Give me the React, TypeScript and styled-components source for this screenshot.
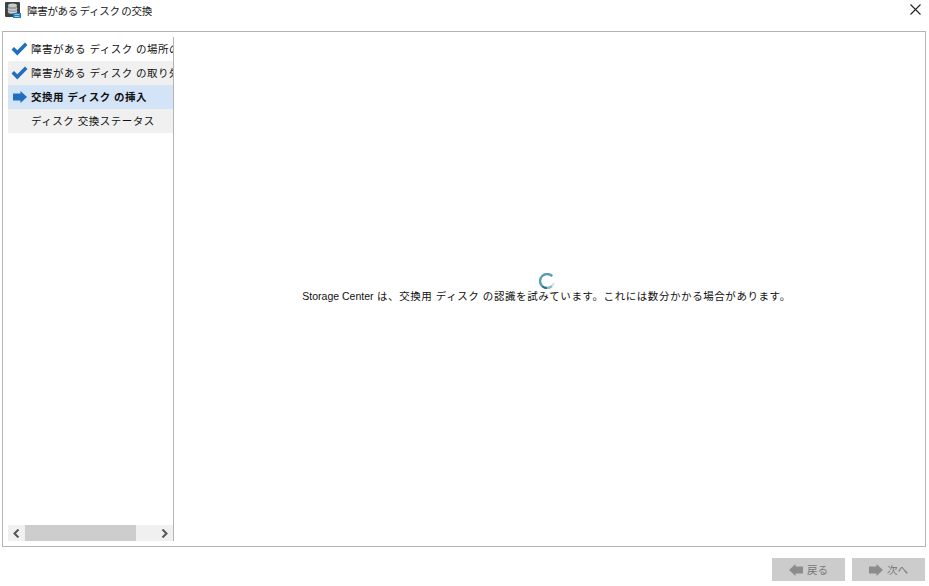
import React from "react"
import styled, { createGlobalStyle } from "styled-components"

const jpFont = `"Liberation Sans", "Noto Sans CJK JP", sans-serif`

const GlobalStyle = createGlobalStyle`
  html, body {
    margin: 0;
    padding: 0;
    background: #fff;
    font-family: ${jpFont};
  }
`

const steps = [
  { id: 1, label: "障害がある ディスク の場所の確認", state: "done" },
  { id: 2, label: "障害がある ディスク の取り外し", state: "done" },
  { id: 3, label: "交換用 ディスク の挿入", state: "current" },
  { id: 4, label: "ディスク 交換ステータス", state: "todo" },
]

const CheckIcon = () => (
  <svg width="17" height="14" viewBox="0 0 17 14">
    <path d="M0.5 7.5 L3 5 L6.3 8.2 L14 0.5 L16.5 3 L6.3 13.5 Z" fill="#1f6fbe" />
  </svg>
)

const ArrowIcon = ({ color, flip }: { color: string; flip?: boolean }) => (
  <svg
    width="14"
    height="12"
    viewBox="0 0 14 12"
    style={flip ? { transform: "scaleX(-1)" } : undefined}
  >
    <path d="M0 2.5 H7.5 V0 L14 6 L7.5 12 V9.5 H0 Z" fill={color} />
  </svg>
)

const AppIcon = () => (
  <svg width="16" height="16" viewBox="0 0 16 16">
    <rect x="0" y="0" width="15" height="15" rx="1" fill="#3f4244" />
    <ellipse cx="7.5" cy="3.5" rx="4.5" ry="2" fill="#c9cccd" />
    <path d="M3 3.5 V10.5 C3 12.5 12 12.5 12 10.5 V3.5 C12 5.5 3 5.5 3 3.5 Z" fill="#9a9fa2" />
    <path d="M3 6.5 C3 8.5 12 8.5 12 6.5 M3 9 C3 11 12 11 12 9" stroke="#e3e5e6" fill="none" />
    <rect x="8" y="11" width="8" height="5" fill="#1d7fbf" />
    <path d="M9.5 12.5 H14.5 M9.5 14.5 H14.5" stroke="#bcdcf0" strokeWidth="0.8" />
  </svg>
)

const CloseIcon = () => (
  <svg width="11" height="11" viewBox="0 0 11 11">
    <path d="M0.5 0.5 L10.5 10.5 M10.5 0.5 L0.5 10.5" stroke="#222" strokeWidth="1.1" fill="none" />
  </svg>
)

const Spinner = () => (
  <svg width="16" height="16" viewBox="0 0 16 16">
    <path d="M13.2 3.2 A7 7 0 0 0 3 13" stroke="#5b9db0" strokeWidth="2.4" fill="none" />
    <path d="M3 13 A7 7 0 0 0 8 15" stroke="#2a7389" strokeWidth="2.4" fill="none" />
    <path d="M8 15 A7 7 0 0 0 13 12.9" stroke="#8bbccb" strokeWidth="2.4" fill="none" />
    <path d="M13 12.9 A7 7 0 0 0 14.7 10" stroke="#d3e6ec" strokeWidth="2.4" fill="none" />
  </svg>
)

const App = () => (
  <>
    <GlobalStyle />
    <WindowStyled>
      <TitleBarStyled>
        <TitleGroupStyled>
          <AppIcon />
          <TitleTextStyled>障害がある ディスク の交換</TitleTextStyled>
        </TitleGroupStyled>
        <CloseButtonStyled>
          <CloseIcon />
        </CloseButtonStyled>
      </TitleBarStyled>
      <FrameStyled>
        <SideStyled>
          <StepListStyled>
            {steps.map((step, i) => (
              <StepRowStyled key={step.id} $state={step.state} $odd={i % 2 === 1}>
                <StepIconStyled>
                  {step.state === "done" && <CheckIcon />}
                  {step.state === "current" && <ArrowIcon color="#1f6fbe" />}
                </StepIconStyled>
                <StepLabelStyled $current={step.state === "current"}>
                  {step.label}
                </StepLabelStyled>
              </StepRowStyled>
            ))}
          </StepListStyled>
          <ScrollBarStyled>
            <ScrollArrowStyled>
              <svg width="7" height="9" viewBox="0 0 7 9">
                <path d="M5.5 0.5 L1.5 4.5 L5.5 8.5" stroke="#555" strokeWidth="2" fill="none" />
              </svg>
            </ScrollArrowStyled>
            <ScrollTrackStyled>
              <ScrollThumbStyled />
            </ScrollTrackStyled>
            <ScrollArrowStyled>
              <svg width="7" height="9" viewBox="0 0 7 9">
                <path d="M1.5 0.5 L5.5 4.5 L1.5 8.5" stroke="#555" strokeWidth="2" fill="none" />
              </svg>
            </ScrollArrowStyled>
          </ScrollBarStyled>
        </SideStyled>
        <MainStyled>
          <SpinnerWrapStyled>
            <Spinner />
          </SpinnerWrapStyled>
          <MessageStyled>
            <LatinStyled>Storage Center</LatinStyled> は、交換用 ディスク の認識を試みています。これには数分かかる場合があります。
          </MessageStyled>
        </MainStyled>
      </FrameStyled>
      <FooterStyled>
        <NavButtonStyled>
          <ArrowIcon color="#8c8c8c" flip />
          戻る
        </NavButtonStyled>
        <NavButtonStyled>
          <ArrowIcon color="#8c8c8c" />
          次へ
        </NavButtonStyled>
      </FooterStyled>
    </WindowStyled>
  </>
)

const WindowStyled = styled.div`
  width: 929px;
  height: 586px;
  display: flex;
  flex-direction: column;
  overflow: hidden;
  background: #fff;
`

const TitleBarStyled = styled.div`
  height: 31px;
  flex: none;
  display: flex;
  align-items: flex-start;
  justify-content: space-between;
  padding: 2px 8px 0 5px;
  box-sizing: border-box;
`

const TitleGroupStyled = styled.div`
  display: flex;
  align-items: center;
  gap: 6px;
  height: 16px;
`

const TitleTextStyled = styled.div`
  font-size: 10.5px;
  letter-spacing: -0.3px;
  word-spacing: -1px;
  color: #222;
  white-space: nowrap;
`

const CloseButtonStyled = styled.div`
  display: flex;
  padding-top: 2px;
`

const FrameStyled = styled.div`
  height: 516px;
  flex: none;
  margin: 0 3px 0 2px;
  border: 1px solid #b4b4b4;
  box-sizing: border-box;
  display: flex;
  padding: 5px 0 5px 5px;
`

const SideStyled = styled.div`
  width: 166px;
  flex: none;
  box-sizing: border-box;
  border-right: 1px solid #b4b4b4;
  display: flex;
  flex-direction: column;
`

const StepListStyled = styled.div`
  flex: 1;
  min-height: 0;
  overflow: hidden;
`

const rowBackground = (state: string, odd: boolean) => {
  if (state === "current") return "#d3e4f7"
  return odd ? "#f0f0f0" : "#fff"
}

const StepRowStyled = styled.div<{ $state: string; $odd: boolean }>`
  height: 24px;
  width: 165px;
  display: flex;
  align-items: center;
  background: ${props => rowBackground(props.$state, props.$odd)};
  white-space: nowrap;
`

const StepIconStyled = styled.div`
  width: 23px;
  flex: none;
  display: flex;
  justify-content: center;
`

const StepLabelStyled = styled.div<{ $current: boolean }>`
  font-size: 10.5px;
  letter-spacing: 0.5px;
  margin-top: -1px;
  color: #111;
  font-weight: ${props => (props.$current ? 700 : 400)};
  width: 142px;
  overflow: hidden;
  white-space: nowrap;
`

const ScrollBarStyled = styled.div`
  height: 16px;
  flex: none;
  display: flex;
  background: #f0f0f0;
`

const ScrollArrowStyled = styled.div`
  width: 17px;
  flex: none;
  display: flex;
  align-items: center;
  justify-content: center;
`

const ScrollTrackStyled = styled.div`
  flex: 1;
  display: flex;
`

const ScrollThumbStyled = styled.div`
  width: 111px;
  background: #cdcdcd;
`

const MainStyled = styled.div`
  flex: 1;
  min-width: 0;
  display: flex;
  flex-direction: column;
  align-items: center;
  padding-top: 236px;
`

const SpinnerWrapStyled = styled.div`
  height: 16px;
  display: flex;
  margin-right: 6px;
`

const MessageStyled = styled.div`
  font-size: 10.5px;
  letter-spacing: 0.57px;
  color: #111;
  margin: -1px 6px 0 0;
  white-space: nowrap;
`

const LatinStyled = styled.span`
  letter-spacing: 0;
`

const FooterStyled = styled.div`
  flex: 1;
  display: flex;
  justify-content: flex-end;
  gap: 7px;
  padding: 11px 4px 0 0;
`

const NavButtonStyled = styled.div`
  width: 73px;
  height: 23px;
  background: #cccccc;
  display: flex;
  align-items: center;
  justify-content: center;
  gap: 4px;
  font-size: 10.5px;
  color: #777;
`

export default App
